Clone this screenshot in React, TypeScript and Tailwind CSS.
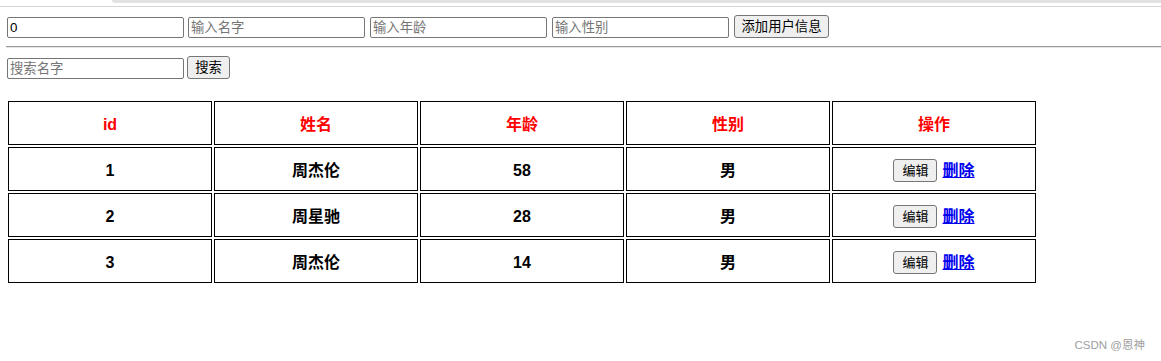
import React from 'react';

const users = [
  { id: 1, name: '周杰伦', age: 58, sex: '男' },
  { id: 2, name: '周星驰', age: 28, sex: '男' },
  { id: 3, name: '周杰伦', age: 14, sex: '男' },
];

const headers = ['id', '姓名', '年龄', '性别', '操作'];

const inputCls =
  'h-[21px] w-[177px] border border-[#767676] rounded-[2px] px-[2px] text-[13.33px] leading-none text-black placeholder:text-[#757575] outline-none';

const btnCls =
  'h-[23px] border border-[#767676] rounded-[3px] bg-[#efefef] px-[6px] text-[13.33px] leading-none text-black';

function Cell({ children, className = '' }: { children: React.ReactNode; className?: string }) {
  return (
    <div className={`h-[44px] pt-[3px] border border-black flex items-center justify-center font-bold text-[16px] ${className}`}>
      {children}
    </div>
  );
}

export default function App() {
  return (
    <div
      className="relative w-[1161px] h-[361px] bg-white overflow-hidden"
      style={{ fontFamily: '"Liberation Sans", "Noto Sans CJK SC", sans-serif' }}
    >
      {/* browser chrome remnants */}
      <div className="h-[3px] ml-[112px] bg-[#e2e2e2] rounded-bl-[3px]" />
      <div className="mt-[3px] h-px bg-[#d4d4d4]" />

      <div className="mt-[8px] ml-[7px] flex items-end gap-[4px]">
        <input className={inputCls} defaultValue="0" />
        <input className={inputCls} placeholder="输入名字" />
        <input className={`${inputCls} ml-[1px]`} placeholder="输入年龄" />
        <input className={`${inputCls} ml-[1px]`} placeholder="输入性别" />
        <button className={`${btnCls} ml-[1px] w-[95px]`}>添加用户信息</button>
      </div>

      <div className="mt-[8px] ml-[6px] border-t border-[#9a9a9a] border-b border-b-[#e6e6e6]" />

      <div className="mt-[8px] ml-[7px] flex items-end gap-[3px]">
        <input className={inputCls} placeholder="搜索名字" />
        <button className={`${btnCls} w-[43px]`}>搜索</button>
      </div>

      <div className="mt-[22px] ml-[8px] grid grid-cols-[repeat(5,204px)] gap-[2px]">
        {headers.map((h) => (
          <Cell key={h} className="text-[#ff0000]">
            {h}
          </Cell>
        ))}
        {users.map((u) => (
          <React.Fragment key={u.id}>
            <Cell>{u.id}</Cell>
            <Cell>{u.name}</Cell>
            <Cell>{u.age}</Cell>
            <Cell>{u.sex}</Cell>
            <Cell className="gap-[5px] pt-[1px]">
              <button className="h-[23px] w-[44px] border border-[#767676] rounded-[3px] bg-[#efefef] text-[13px] font-normal leading-none text-black">
                编辑
              </button>
              <a href="#" className="text-[#0000ee] underline text-[16px] font-bold">
                删除
              </a>
            </Cell>
          </React.Fragment>
        ))}
      </div>

      <div className="absolute right-[16px] top-[337px] text-[11.5px] text-[#a0a0a0]">CSDN @恩神</div>
    </div>
  );
}
